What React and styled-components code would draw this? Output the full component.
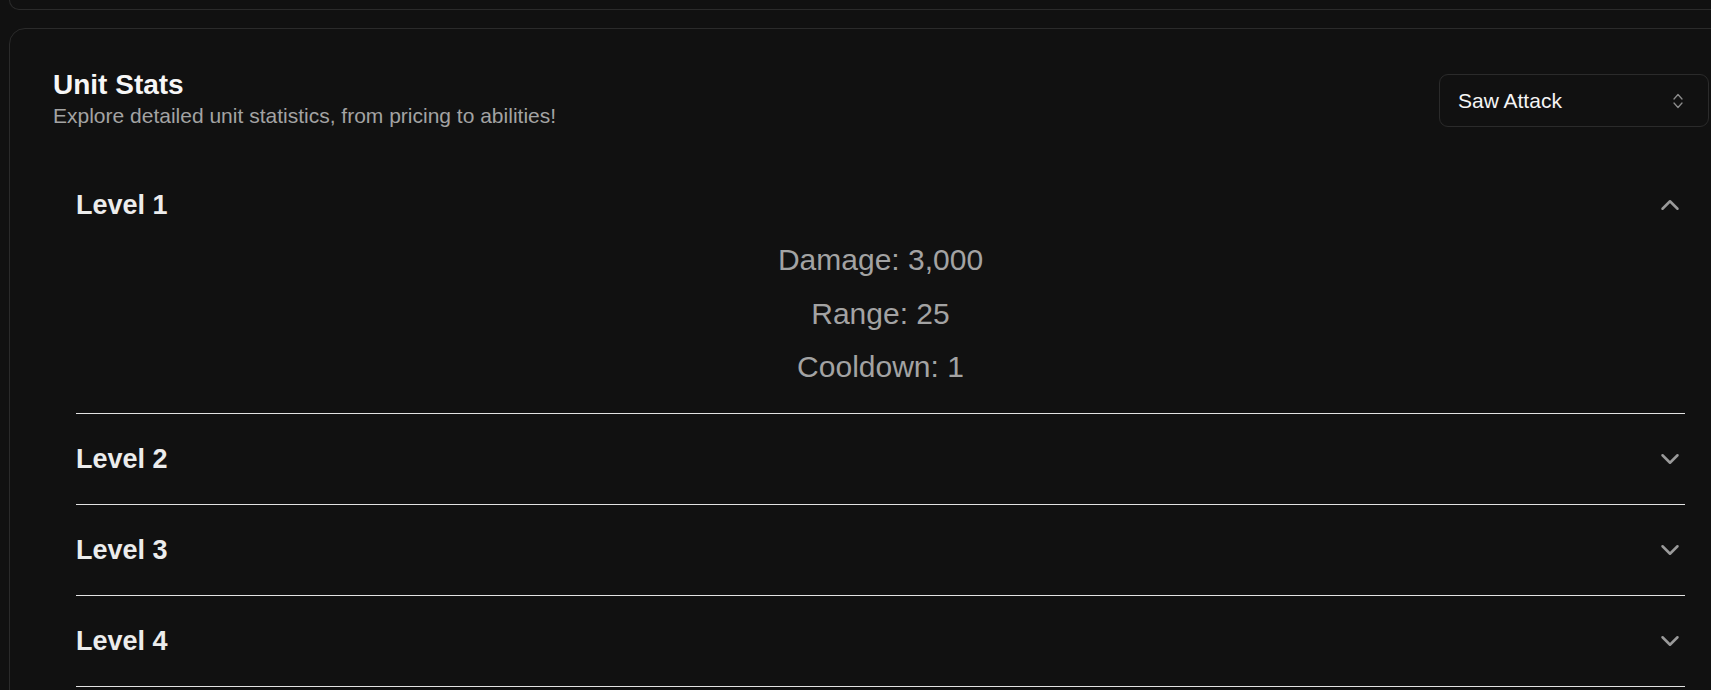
import React, { useState } from 'react'
import styled, { createGlobalStyle } from 'styled-components'
import { ChevronDown, ChevronUp } from 'lucide-react'

const GlobalStyle = createGlobalStyle`
  html, body {
    margin: 0;
    padding: 0;
    background: #111111;
    overflow: hidden;
  }
  body {
    font-family: "Liberation Sans", Arial, sans-serif;
    color: #f5f5f5;
  }
  * { box-sizing: border-box; }
`

const Page = styled.div`
  display: flex;
  flex-direction: column;
  gap: 18px;
  padding-left: 9px;
  min-height: 690px;
`

const PrevCard = styled.div`
  width: 1744px;
  height: 10px;
  border: 1px solid #2b2b2b;
  border-top: none;
  border-radius: 0 0 16px 16px;
  background: #111111;
`

const Card = styled.section`
  width: 1744px;
  border: 1px solid #2b2b2b;
  border-radius: 16px;
  background: #111111;
  padding: 40px 43px 40px 43px;
`

const Header = styled.div`
  display: flex;
  justify-content: space-between;
  align-items: flex-start;
`

const TitleBlock = styled.div`
  display: flex;
  flex-direction: column;
`

const Title = styled.h2`
  margin: 0;
  font-size: 28px;
  line-height: 32px;
  font-weight: 700;
  color: #f7f7f7;
`

const Subtitle = styled.p`
  margin: 3px 0 0;
  font-size: 21px;
  line-height: 24px;
  color: #a3a3a3;
`

const Select = styled.button`
  margin-top: 5px;
  width: 270px;
  height: 53px;
  display: flex;
  align-items: center;
  justify-content: space-between;
  padding: 0 25px 0 18px;
  background: #111111;
  border: 1px solid #2b2b2b;
  border-radius: 9px;
  color: #f5f5f5;
  font-family: inherit;
  font-size: 21px;
  cursor: pointer;
`

const SortIcon = () => (
  <svg width="10" height="16" viewBox="0 0 10 16" fill="none" stroke="#8c8c8c" strokeWidth="1.3" strokeLinecap="round" strokeLinejoin="round">
    <polyline points="1,6 5,1.5 9,6" />
    <polyline points="1,10 5,14.5 9,10" />
  </svg>
)

const Accordion = styled.div`
  margin: 32px 24px 0 23px;
`

const Item = styled.div`
  border-bottom: 1px solid #e3e3e3;
`

const Trigger = styled.button`
  width: 100%;
  display: flex;
  align-items: center;
  justify-content: space-between;
  padding: 29px 0 ${props => (props.open ? '10px' : '29px')};
  background: none;
  border: none;
  color: #ececec;
  font-family: inherit;
  font-size: 27px;
  line-height: 32px;
  font-weight: 700;
  text-align: left;
  cursor: pointer;

  svg {
    color: #9a9a9a;
    flex-shrink: 0;
  }
`

const Content = styled.div`
  display: flex;
  flex-direction: column;
  align-items: center;
  gap: 17.5px;
  padding: 11px 0 28px;
`

const Stat = styled.p`
  margin: 0;
  font-size: 30px;
  line-height: 36px;
  color: #a3a3a3;
`

const levels = [
  { name: 'Level 1', stats: [['Damage', '3,000'], ['Range', '25'], ['Cooldown', '1']] },
  { name: 'Level 2', stats: [['Damage', '4,500'], ['Range', '25'], ['Cooldown', '1']] },
  { name: 'Level 3', stats: [['Damage', '6,000'], ['Range', '27'], ['Cooldown', '1']] },
  { name: 'Level 4', stats: [['Damage', '8,000'], ['Range', '30'], ['Cooldown', '1']] },
]

export default function App() {
  const [open, setOpen] = useState(0)

  return (
    <>
      <GlobalStyle />
      <Page>
        <PrevCard />
        <Card>
          <Header>
            <TitleBlock>
              <Title>Unit Stats</Title>
              <Subtitle>Explore detailed unit statistics, from pricing to abilities!</Subtitle>
            </TitleBlock>
            <Select>
              <span>Saw Attack</span>
              <SortIcon />
            </Select>
          </Header>
          <Accordion>
            {levels.map((lvl, i) => (
              <Item key={lvl.name}>
                <Trigger open={open === i} onClick={() => setOpen(open === i ? -1 : i)}>
                  {lvl.name}
                  {open === i
                    ? <ChevronUp size={30} strokeWidth={2} />
                    : <ChevronDown size={30} strokeWidth={2} />}
                </Trigger>
                {open === i && (
                  <Content>
                    {lvl.stats.map(([label, value]) => (
                      <Stat key={label}>{label}: {value}</Stat>
                    ))}
                  </Content>
                )}
              </Item>
            ))}
          </Accordion>
        </Card>
      </Page>
    </>
  )
}
